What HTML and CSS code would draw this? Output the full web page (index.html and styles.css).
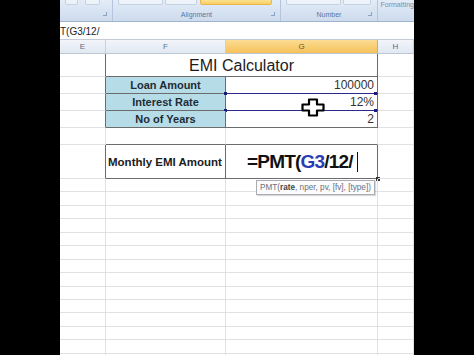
FILE: index.html
```html
<!DOCTYPE html>
<html lang="en">
<head>
  <meta charset="UTF-8" />
  <title>EMI Calculator</title>
  <link rel="stylesheet" href="styles.css">
</head>
<body>
  <div class="screen">
    <div class="ribbon">
      <div class="group g-clip">
        <div class="btns"><span class="btn b1"></span><span class="btn b2"></span></div>
        <div class="glabel"><span></span><span class="launch"></span></div>
      </div>
      <div class="group g-align">
        <div class="btns"><span class="btn b3"></span><span class="btn b4"></span><span class="btn hot"></span></div>
        <div class="glabel"><span>Alignment</span><span class="launch"></span></div>
      </div>
      <div class="group g-num">
        <div class="btns"><span class="btn b5"></span><span class="btn b6"></span></div>
        <div class="glabel"><span>Number</span><span class="launch"></span></div>
      </div>
      <div class="group g-fmt">
        <div class="fmt-text">Formatting</div>
      </div>
    </div>

    <div class="formula">T(G3/12/</div>

    <div class="sheet">
      <div class="hd">E</div>
      <div class="hd">F</div>
      <div class="hd hd-sel">G</div>
      <div class="hd">H</div>

      <div class="c edge-r"></div>
      <div class="c title span2">EMI Calculator</div>
      <div class="c"></div>

      <div class="c edge-r"></div>
      <div class="c lbl">Loan Amount</div>
      <div class="c val">100000</div>
      <div class="c"></div>

      <div class="c edge-r"></div>
      <div class="c lbl">Interest Rate</div>
      <div class="c val marquee">12%
        <svg class="cursor" width="24" height="19" viewBox="0 0 24 19">
          <path d="M8 1.5h8v5h6.5v6H16v5H8v-5H1.5v-6H8z" fill="#fff" stroke="#000" stroke-width="2.2" stroke-linejoin="round"/>
        </svg>
      </div>
      <div class="c"></div>

      <div class="c edge-r"></div>
      <div class="c lbl">No of Years</div>
      <div class="c val">2</div>
      <div class="c"></div>

      <div class="c"></div>
      <div class="c edge-b"></div>
      <div class="c edge-b"></div>
      <div class="c"></div>

      <div class="c edge-r"></div>
      <div class="c emi-lbl">Monthly EMI Amount</div>
      <div class="c emi-val">=PMT(<span class="ref">G3</span>/12/<span class="caret"></span>
        <div class="tip">PMT(<b>rate</b>, nper, pv, [fv], [type])</div>
      </div>
      <div class="c"></div>

      <div class="c"></div><div class="c"></div><div class="c"></div><div class="c"></div>
      <div class="c"></div><div class="c"></div><div class="c"></div><div class="c"></div>
      <div class="c"></div><div class="c"></div><div class="c"></div><div class="c"></div>
      <div class="c"></div><div class="c"></div><div class="c"></div><div class="c"></div>
      <div class="c"></div><div class="c"></div><div class="c"></div><div class="c"></div>
      <div class="c"></div><div class="c"></div><div class="c"></div><div class="c"></div>
      <div class="c"></div><div class="c"></div><div class="c"></div><div class="c"></div>
      <div class="c"></div><div class="c"></div><div class="c"></div><div class="c"></div>
      <div class="c"></div><div class="c"></div><div class="c"></div><div class="c"></div>
      <div class="c"></div><div class="c"></div><div class="c"></div><div class="c"></div>
      <div class="c"></div><div class="c"></div><div class="c"></div><div class="c"></div>
      <div class="c"></div><div class="c"></div><div class="c"></div><div class="c"></div>
      <div class="c"></div><div class="c"></div><div class="c"></div><div class="c"></div>
      <div class="c"></div><div class="c"></div><div class="c"></div><div class="c"></div>
    </div>
  </div>
</body>
</html>
```

FILE: styles.css
```css
* {
  box-sizing: border-box;
}

body {
  margin: 0;
  background-color: #000;
  display: flex;
  justify-content: center;
  height: 355px;
  overflow: hidden;
  font-family: "Liberation Sans", Arial, sans-serif;
}

.screen {
  width: 354px;
  height: 355px;
  background-color: #fff;
  overflow: hidden;
}

/* ribbon */
.ribbon {
  display: flex;
  height: 22px;
  background: linear-gradient(#e3ecf7, #cddbed);
  border-bottom: 1px solid #9fb3cf;
}

.group {
  border-right: 1px solid #b3c4dc;
  display: flex;
  flex-direction: column;
}

.g-clip { width: 53px; }
.g-align { width: 170px; }
.g-num { width: 97px; }
.g-fmt { flex: 1; border-right: none; }

.btns {
  height: 7px;
  position: relative;
}

.btn {
  position: absolute;
  top: -3px;
  height: 8px;
  border: 1px solid #c3d1e4;
  border-radius: 2px;
  background: #eef3fa;
}

.b1 { left: 5px; width: 13px; }
.b2 { left: 25px; width: 15px; }
.b3 { left: 5px; width: 45px; }
.b4 { left: 52px; width: 32px; }
.b5 { left: 5px; width: 55px; }
.b6 { left: 62px; width: 28px; }

.btn.hot {
  left: 87px;
  width: 72px;
  background: linear-gradient(#fde9a8, #f8cf62);
  border-color: #e8b64c;
}

.glabel {
  flex: 1;
  display: flex;
  justify-content: center;
  align-items: center;
  position: relative;
  font-size: 7px;
  color: #5a76a0;
}

.launch {
  position: absolute;
  right: 5px;
  top: 5px;
  width: 4px;
  height: 4px;
  border-right: 1px solid #8aa2c4;
  border-bottom: 1px solid #8aa2c4;
}

.fmt-text {
  font-size: 7px;
  color: #7a8fae;
  padding: 1px 0 0 3px;
}

/* formula bar */
.formula {
  height: 18px;
  border-bottom: 1px solid #c4cbd6;
  font-size: 10px;
  line-height: 17px;
  color: #222;
  padding-top: 1px;
}

/* sheet */
.sheet {
  display: grid;
  grid-template-columns: 46px 120px 152px 36px;
  grid-template-rows: 14px 23px 17px 17px 17px 17px 34px;
  grid-auto-rows: 13.45px;
}

.hd {
  background: linear-gradient(#f2f5fa, #e1e8f2);
  border-right: 1px solid #c5cfdd;
  border-bottom: 1px solid #bcc7d6;
  font-size: 8px;
  color: #5b6d86;
  display: flex;
  justify-content: center;
  align-items: center;
}

.hd-sel {
  background: linear-gradient(#fbdc93, #f5c15a);
  border-right-color: #e0ab4a;
  color: #6b5427;
}

.c {
  border-right: 1px solid #dfe1e4;
  border-bottom: 1px solid #dfe1e4;
  position: relative;
}

.span2 {
  grid-column: span 2;
}

.edge-r {
  border-right-color: #6c6c6c;
}

.edge-b {
  border-bottom-color: #6c6c6c;
}

.title {
  border-right-color: #6c6c6c;
  border-bottom-color: #6c6c6c;
  font-size: 16px;
  color: #1c1c1c;
  display: flex;
  justify-content: center;
  align-items: center;
  padding-top: 2px;
}

.lbl {
  background-color: #b6dce8;
  border-right-color: #6c6c6c;
  border-bottom-color: #6c6c6c;
  font-size: 11px;
  font-weight: bold;
  color: #1e2c36;
  display: flex;
  justify-content: center;
  align-items: center;
}

.val {
  border-right-color: #6c6c6c;
  border-bottom-color: #6c6c6c;
  font-size: 12px;
  color: #333;
  display: flex;
  justify-content: flex-end;
  align-items: center;
  padding-right: 3px;
}

/* copy marquee on the interest rate cell */
.marquee::before {
  content: "";
  position: absolute;
  left: -1px;
  right: -1px;
  top: -1px;
  bottom: -1px;
  border-top: 1px solid #2a2a8c;
  border-bottom: 1px solid #2a2a8c;
  pointer-events: none;
}

.marquee::after {
  content: "";
  position: absolute;
  left: -2px;
  top: -2px;
  width: 3px;
  height: 3px;
  background: #1b1b7a;
  box-shadow: 0 17px 0 #1b1b7a, 150px 0 0 #1b1b7a, 150px 17px 0 #1b1b7a;
}

.cursor {
  position: absolute;
  left: 75px;
  top: 4px;
}

.emi-lbl {
  border-right-color: #6c6c6c;
  border-bottom-color: #6c6c6c;
  font-size: 11.5px;
  font-weight: bold;
  color: #1c1c1c;
  display: flex;
  align-items: center;
  padding-left: 2px;
  white-space: nowrap;
}

.emi-val {
  border-right-color: #6c6c6c;
  border-bottom-color: #6c6c6c;
  font-size: 19px;
  font-weight: bold;
  letter-spacing: -0.8px;
  color: #111;
  display: flex;
  align-items: center;
  padding-left: 21px;
  padding-top: 1px;
}

.emi-val::after {
  content: "";
  position: absolute;
  right: -3px;
  bottom: -3px;
  width: 4px;
  height: 4px;
  background: #333;
}

.ref {
  color: #2a3db5;
}

.caret {
  display: inline-block;
  width: 1px;
  height: 20px;
  margin-left: 4px;
  background: #111;
}

.tip {
  position: absolute;
  left: 30px;
  top: 35px;
  height: 15px;
  padding: 0 3px;
  background: #fbfbfb;
  border: 1px solid #a9acb4;
  box-shadow: 1px 1px 1px rgba(0, 0, 0, 0.15);
  font-size: 8.2px;
  font-weight: normal;
  letter-spacing: 0;
  line-height: 13px;
  color: #6c7080;
  white-space: nowrap;
  z-index: 2;
}

.tip b {
  color: #444;
}
```
